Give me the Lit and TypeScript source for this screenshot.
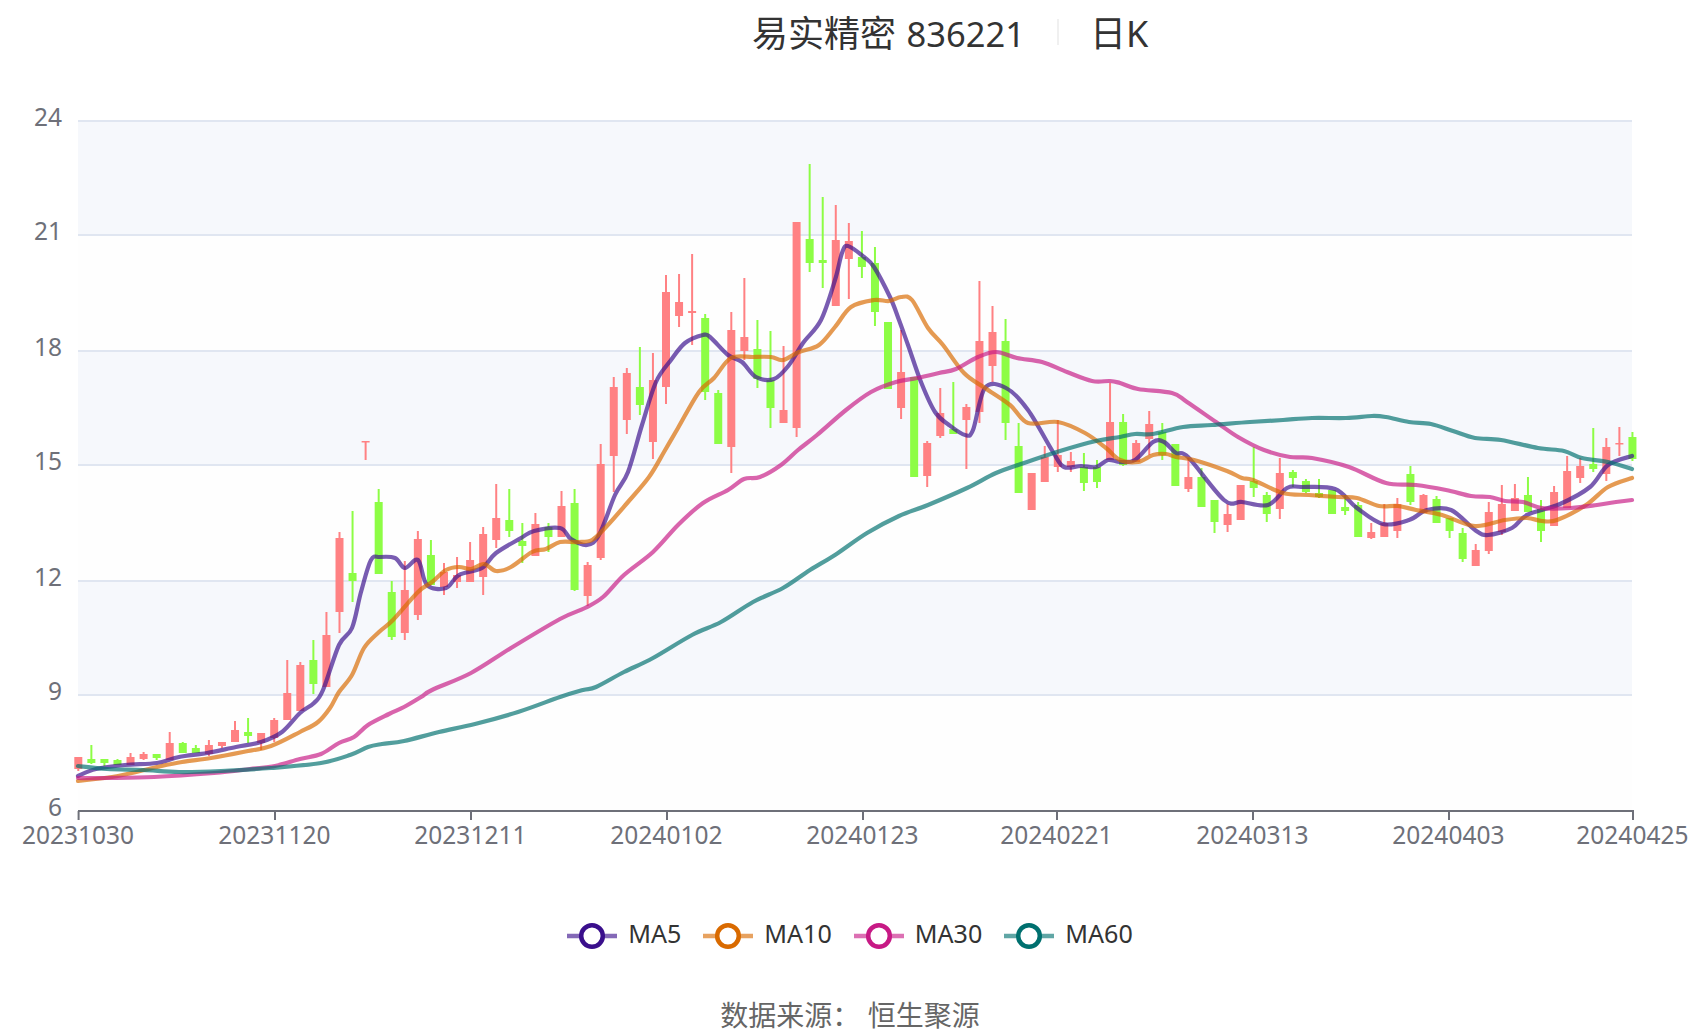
import { LitElement, html, css, svg } from "lit";
import { customElement } from "lit/decorators.js";

// [high, bodyTop, bodyBottom, low, colour] in chart pixels, one per trading day
type C = [number, number, number, number, "r" | "g"];
const CANDLES: C[] = [
  [757,757,769,771,"r"],[745,759,763,764,"g"],[759,759,763,766,"g"],[759,760,765,765,"g"],[753,757,765,765,"r"],
  [752,754,759,760,"r"],[754,754,758,760,"g"],[732,743,760,760,"r"],[742,743,753,753,"g"],[745,748,753,753,"g"],
  [740,745,754,756,"r"],[742,742,746,748,"r"],[721,730,742,742,"r"],[718,732,736,743,"g"],[733,733,743,750,"r"],
  [718,720,738,742,"r"],[660,693,720,720,"r"],[662,665,711,711,"r"],[640,660,684,694,"g"],[612,635,687,687,"r"],
  [532,538,612,633,"r"],[511,573,581,602,"g"],[441,441,442.5,460,"r"],[489,502,574,574,"g"],[581,592,637,640,"g"],
  [561,590,633,640,"r"],[531,539,615,620,"r"],[540,555,585,585,"g"],[563,572,587,595,"r"],[557,575,582,588,"r"],
  [542,560,582,582,"r"],[527,534,577,595,"r"],[484,518,540,548,"r"],[489,520,531,537,"g"],[523,541,546,563,"g"],
  [513,524,556,556,"r"],[523,527,537,552,"g"],[491,506,537,537,"r"],[489,503,590,591,"g"],[562,565,596,606,"r"],
  [444,464,558,560,"r"],[377,387,456,492,"r"],[368,373,420,434,"r"],[347,387,405,415,"g"],[353,380,442,459,"r"],
  [275,292,387,404,"r"],[274,302,316,327,"r"],[254,311,313,345,"r"],[314,318,392,400,"g"],[390,393,444,444,"g"],
  [312,330,447,473,"r"],[278,337,351,360,"r"],[320,349,379,388,"g"],[331,380,408,428,"g"],[346,410,423,423,"r"],
  [222,222,428,437,"r"],[164,239,263,272,"g"],[197,260,263,288,"g"],[205,240,306,306,"r"],[223,241,259,299,"r"],
  [231,257,267,278,"g"],[247,263,312,326,"g"],[322,322,389,389,"g"],[330,372,408,419,"r"],[377,377,477,477,"g"],
  [441,443,476,487,"r"],[388,413,436,438,"r"],[382,429,434,434,"g"],[404,407,420,469,"r"],[281,341,412,423,"r"],
  [306,332,366,382,"r"],[319,341,423,440,"g"],[423,446,493,493,"g"],[473,473,510,510,"r"],[446,457,482,482,"r"],
  [420,455,467,472,"r"],[452,461,467,472,"r"],[453,467,483,491,"g"],[460,467,482,488,"g"],[383,422,460,460,"r"],
  [414,422,465,466,"g"],[440,443,462,462,"r"],[411,424,439,455,"r"],[423,432,455,460,"g"],[444,444,486,486,"g"],
  [458,477,489,492,"r"],[468,477,507,507,"g"],[500,500,522,533,"g"],[504,514,525,532,"r"],[485,485,520,520,"r"],
  [447,481,488,497,"g"],[492,495,514,522,"g"],[458,473,509,519,"r"],[470,472,478,487,"g"],[479,481,492,493,"g"],
  [479,493,497,498,"g"],[490,490,514,514,"g"],[495,507,511,515,"g"],[502,505,537,537,"g"],[523,532,538,539,"r"],
  [504,523,537,537,"r"],[498,504,531,538,"r"],[466,474,502,505,"g"],[494,495,513,513,"r"],[496,499,523,523,"g"],
  [518,518,531,538,"g"],[528,533,559,562,"g"],[544,550,566,566,"r"],[502,512,551,554,"r"],[485,504,532,535,"r"],
  [484,498,511,511,"r"],[477,495,512,512,"g"],[500,509,531,542,"g"],[486,492,526,526,"r"],[456,471,508,508,"r"],
  [458,466,478,483,"r"],[428,464,469,472,"g"],[438,447,474,481,"r"],[427,443,444.5,456,"r"],[432,437,459,461,"g"],
];

const MA5: number[] = [78,776,96,769,125,765,157,763,179,757,207,753,236,747,261,742,282,732,300,713,314,703,323,690,339,645,352,628,361,592,371,560,380,557,395,558,405,568,418,560,427,585,446,588,459,575,482,568,496,553,521,538,534,531,560,528,571,539,587,545,599,535,615,495,628,472,642,425,656,382,671,360,685,343,703,335,710,337,728,355,742,362,756,377,774,379,789,365,803,343,821,320,835,280,842,253,848,246,864,257,874,267,890,297,899,320,908,345,921,382,935,412,949,425,965,435,973,430,985,388,1006,388,1028,410,1053,452,1064,467,1081,466,1096,467,1108,460,1120,462,1135,460,1153,442,1164,442,1176,453,1188,457,1224,500,1242,502,1268,505,1287,488,1301,487,1335,489,1357,508,1383,524,1409,520,1427,510,1451,510,1475,530,1488,535,1512,528,1527,515,1560,504,1590,487,1608,465,1632,456];
const MA10: number[] = [78,781,118,776,157,767,182,762,211,758,243,752,271,746,300,732,318,722,330,708,339,692,352,675,364,648,379,632,393,620,418,592,432,582,446,570,459,567,471,569,484,564,496,571,511,567,532,552,546,549,560,542,578,542,592,540,606,527,628,502,649,477,664,452,678,428,699,392,714,378,731,358,753,357,771,357,783,360,799,352,819,345,835,327,851,307,874,300,889,301,901,297,912,300,928,328,943,345,964,373,985,388,1010,405,1028,423,1058,422,1085,433,1106,448,1120,460,1138,462,1153,455,1166,454,1176,457,1194,460,1227,471,1242,478,1253,480,1283,493,1309,495,1338,497,1357,498,1379,506,1398,506,1416,510,1442,515,1475,526,1505,520,1527,518,1542,521,1557,520,1586,505,1608,487,1632,478];
const MA30: number[] = [78,778,107,778,154,777,214,773,250,769,275,766,300,759,321,754,339,743,354,737,368,725,389,714,404,707,421,697,432,690,471,673,511,648,560,619,585,608,603,597,624,575,653,552,678,525,703,503,728,490,744,479,760,477,781,465,798,450,817,435,846,410,871,392,896,382,917,378,939,373,956,369,978,357,996,352,1017,358,1042,362,1067,372,1092,381,1110,381,1120,383,1138,389,1172,393,1187,402,1216,422,1238,437,1264,450,1290,457,1312,458,1349,467,1386,483,1416,485,1446,490,1471,496,1490,497,1505,501,1523,502,1542,508,1571,508,1597,505,1616,502,1632,500];
const MA60: number[] = [78,766,107,769,143,770,179,772,221,771,271,768,321,763,350,755,368,747,382,744,404,741,439,732,475,724,518,712,560,697,583,690,596,687,624,672,653,658,692,635,721,622,753,602,783,588,810,570,835,555,867,533,899,516,928,505,967,488,996,473,1024,463,1060,451,1096,441,1120,437,1135,434,1153,434,1183,427,1212,425,1250,422,1283,420,1312,418,1346,418,1372,416,1386,417,1409,422,1431,424,1453,431,1475,438,1501,440,1538,448,1564,451,1582,458,1608,462,1632,469];

function smooth(p: number[]): string {
  const n = p.length / 2;
  const X = (i: number) => p[2 * Math.max(0, Math.min(n - 1, i))];
  const Y = (i: number) => p[2 * Math.max(0, Math.min(n - 1, i)) + 1];
  let d = `M${X(0)} ${Y(0)}`;
  for (let i = 0; i < n - 1; i++) {
    const c1x = X(i) + (X(i + 1) - X(i - 1)) / 6;
    const c1y = Y(i) + (Y(i + 1) - Y(i - 1)) / 6;
    const c2x = X(i + 1) - (X(i + 2) - X(i)) / 6;
    const c2y = Y(i + 1) - (Y(i + 2) - Y(i)) / 6;
    d += `C${c1x.toFixed(1)} ${c1y.toFixed(1)} ${c2x.toFixed(1)} ${c2y.toFixed(1)} ${X(i + 1)} ${Y(i + 1)}`;
  }
  return d;
}

const GRID = [
  { y: 121, label: "24" }, { y: 235, label: "21" }, { y: 351, label: "18" },
  { y: 465, label: "15" }, { y: 581, label: "12" }, { y: 695, label: "9" },
];
const TICKS = [
  { x: 78.6, label: "20231030" }, { x: 275, label: "20231120" }, { x: 471, label: "20231211" },
  { x: 667, label: "20240102" }, { x: 863, label: "20240123" }, { x: 1057, label: "20240221" },
  { x: 1253, label: "20240313" }, { x: 1449, label: "20240403" }, { x: 1633, label: "20240425" },
];
const SERIES = [
  { name: "MA5", cls: "ma5", pts: MA5 },
  { name: "MA10", cls: "ma10", pts: MA10 },
  { name: "MA30", cls: "ma30", pts: MA30 },
  { name: "MA60", cls: "ma60", pts: MA60 },
];
const LEFT = 78, RIGHT = 1632, AXIS = 811;

@customElement("app-root")
export class AppRoot extends LitElement {
  static styles = css`
    :host {
      display: block;
      width: 1700px;
      height: 1034px;
      background: #fff;
      overflow: hidden;
      font-family: "Noto Sans", "Noto Sans CJK SC", sans-serif;
    }
    .page { display: flex; flex-direction: column; height: 100%; }
    .page > * { flex: none; }
    .title {
      height: 100px;
      box-sizing: border-box;
      padding: 9px 0 0 752px;
      display: flex;
      align-items: flex-start;
      font-size: 36px;
      line-height: 50px;
      color: #333;
      white-space: nowrap;
    }
    .code { font-size: 34.5px; margin-left: 1.5px; }
    .sep { width: 2px; height: 26px; margin: 10px 31px 0 32px; background: #f0f0f0; }
    .chart { display: block; width: 1700px; height: 760px; }
    .band-a { fill: #f6f8fc; }
    .band-b { fill: #fefefe; }
    .grid { stroke: #e0e6f1; stroke-width: 2; }
    .axis { stroke: #6e7079; stroke-width: 2; }
    .lab { fill: #6e7079; font-size: 24.5px; }
    .end { text-anchor: end; }
    .mid { text-anchor: middle; }
    .r { fill: #ff8183; stroke: #ff8183; }
    .g { fill: #8dfd45; stroke: #8dfd45; }
    .body { stroke-width: 0; }
    .wick { stroke-width: 2; }
    .line { fill: none; stroke-width: 4.2; opacity: 0.68; stroke-linejoin: round; stroke-linecap: round; }
    .ma5 { stroke: #3a0f8c; }
    .ma10 { stroke: #d96a00; }
    .ma30 { stroke: #c71a85; }
    .ma60 { stroke: #00706f; }
    .legend {
      display: flex;
      justify-content: center;
      gap: 22px;
      height: 86px;
      box-sizing: border-box;
      padding-top: 56px;
      color: #333;
      font-size: 25.1px;
      line-height: 34px;
    }
    .item { display: flex; align-items: center; gap: 11px; height: 34px; }
    .item svg { display: block; width: 50px; height: 30px; margin-top: 5px; }
    .sw { stroke-width: 4.5; opacity: 0.62; }
    .ring { fill: #fff; stroke-width: 4.5; }
    .source {
      text-align: center;
      color: #666;
      font-size: 28px;
      line-height: 40px;
      margin-top: 49px;
      white-space: pre;
    }
  `;

  render() {
    const bands = [0, 1, 2, 3, 4, 5].map((i) => {
      const top = GRID[i].y;
      const bottom = i < 5 ? GRID[i + 1].y : AXIS;
      return svg`<rect class=${i % 2 ? "band-b" : "band-a"} x=${LEFT} y=${top} width=${RIGHT - LEFT} height=${bottom - top}></rect>`;
    });
    const candles = CANDLES.map(([h, t, b, l, c], i) => {
      const x = 78.3 + 13.06 * i;
      return svg`<g class=${c}>
        <line class="wick" x1=${x} x2=${x} y1=${h} y2=${l}></line>
        <rect class="body" x=${x - 4} y=${t} width="8" height=${Math.max(b - t, 1.5)}></rect>
      </g>`;
    });
    return html`
      <div class="page">
        <div class="title"><span>易实精密<span class="code"> 836221</span></span><span class="sep"></span><span>日K</span></div>
        <svg class="chart" viewBox="0 100 1700 760">
          ${bands}
          ${GRID.map((g) => svg`<line class="grid" x1=${LEFT} x2=${RIGHT} y1=${g.y} y2=${g.y}></line>`)}
          ${GRID.map((g) => svg`<text class="lab end" x="62" y=${g.y + 5.3}>${g.label}</text>`)}
          <text class="lab end" x="62" y="816">6</text>
          <line class="axis" x1=${LEFT} x2="1634" y1=${AXIS} y2=${AXIS}></line>
          ${TICKS.map((t) => svg`
            <line class="axis" x1=${t.x} x2=${t.x} y1=${AXIS} y2="820"></line>
            <text class="lab mid" x=${t.x - 0.6} y="844">${t.label}</text>`)}
          ${candles}
          ${SERIES.map((s) => svg`<path class="line ${s.cls}" d=${smooth(s.pts)}></path>`)}
        </svg>
        <div class="legend">
          ${SERIES.map((s) => html`
            <div class="item">
              <svg viewBox="0 0 50 30">
                <line class="sw ${s.cls}" x1="0" x2="50" y1="15" y2="15"></line>
                <circle class="ring ${s.cls}" cx="25" cy="15" r="10.8"></circle>
              </svg>
              <span>${s.name}</span>
            </div>`)}
        </div>
        <div class="source">数据来源： 恒生聚源</div>
      </div>
    `;
  }
}
